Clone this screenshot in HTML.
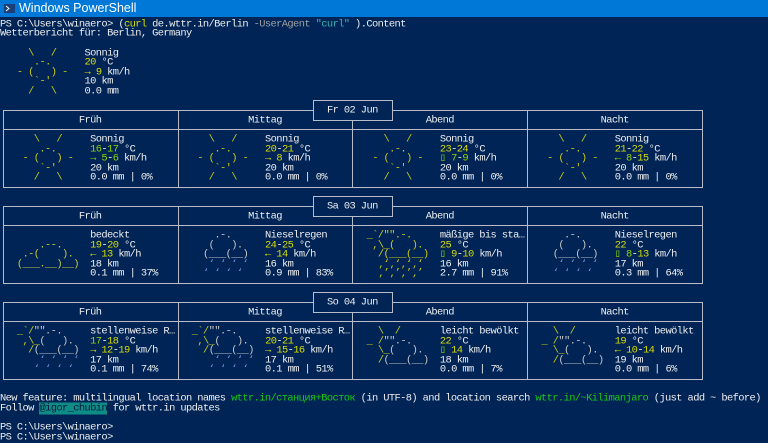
<!DOCTYPE html>
<html><head><meta charset="utf-8"><style>
body{margin:0;width:768px;height:436px;background:#012456;overflow:hidden;position:relative;font-family:"Liberation Mono",monospace;}
.tb{position:absolute;left:0;top:0;width:768px;height:17px;background:#0078d7;color:#fff;font:12.5px "Liberation Sans",sans-serif;line-height:17px;}
.tb span{position:absolute;left:19px;top:0}
.t{position:absolute;margin:0;font:10.4px/9.6px "Liberation Mono","DejaVu Sans Mono",monospace;letter-spacing:-0.6px;white-space:pre;color:#eeeeee;transform:translateY(1.5px);}
.hd{position:absolute;width:169px;text-align:center;font:10.4px/9.6px "Liberation Mono",monospace;letter-spacing:-0.6px;color:#eeeeee;transform:translateY(1.5px);}
.h{position:absolute;height:1px;background:#b6bdc9}
.v{position:absolute;width:1px;background:#b6bdc9}
.y{color:#cdcd10}.o{color:#c9c93a}.g{color:#c8c8c8}.b{color:#6f8fe0}
.n{color:#d7dd00}.m{color:#8fd400}.gr{color:#16c816}.pg{color:#a0a0a0}.cy{color:#3ab0b0}
.bg{background:#0e8c86;color:#0a1a40}
</style></head><body>
<div class="tb"><svg style="position:absolute;left:3px;top:3px" width="12" height="11"><rect x="1" y="1" width="11" height="9" fill="#1b3f7a"/><path d="M3 3l3 2.5-3 2.5" stroke="#fff" fill="none"/></svg><span>Windows PowerShell</span></div>

<pre class="t" style="left:0;top:18.8px">PS C:\Users\winaero&gt; (<span class="n">curl</span> de.wttr.in/Berlin <span class="pg">-UserAgent</span> <span class="cy">"curl"</span> ).Content
Wetterbericht für: Berlin, Germany</pre>
<pre class="t" style="left:0;top:47.6px"> <span class="y">    \   /    </span> Sonnig
 <span class="y">     .-.     </span> <span class="n">20</span> °C
 <span class="y">  - (   ) -  </span> <span class="n">→</span> <span class="n">9</span> km/h
 <span class="y">     `-'     </span> 10 km
 <span class="y">    /   \    </span> 0.0 mm</pre>

<!-- Table 1 -->
<div class="h" style="left:313px;top:100px;width:79px"></div>
<div class="v" style="left:313px;top:100px;height:20px"></div>
<div class="v" style="left:392px;top:100px;height:20px"></div>
<div class="h" style="left:313px;top:120px;width:80px"></div>
<div class="h" style="left:3px;top:110px;width:310px"></div>
<div class="h" style="left:392px;top:110px;width:310px"></div>
<div class="v" style="left:3px;top:110px;height:77px"></div>
<div class="v" style="left:178px;top:110px;height:77px"></div>
<div class="v" style="left:527px;top:110px;height:77px"></div>
<div class="v" style="left:702px;top:110px;height:78px"></div>
<div class="v" style="left:352px;top:120px;height:67px"></div>
<div class="h" style="left:3px;top:129px;width:700px"></div>
<div class="h" style="left:3px;top:187px;width:700px"></div>
<pre class="t" style="left:327px;top:105.2px">Fr 02 Jun</pre>
<div class="hd" style="left:5.6px;top:114.8px">Früh</div>
<div class="hd" style="left:180.5px;top:114.8px">Mittag</div>
<div class="hd" style="left:355.3px;top:114.8px">Abend</div>
<div class="hd" style="left:530.2px;top:114.8px">Nacht</div>
<pre class="t" style="left:5.6px;top:134px"> <span class="y">    \   /    </span> Sonnig
 <span class="y">     .-.     </span> <span class="m">16</span>-<span class="m">17</span> °C
 <span class="y">  - (   ) -  </span> <span class="m">→</span> <span class="m">5</span>-<span class="m">6</span> km/h
 <span class="y">     `-'     </span> 20 km
 <span class="y">    /   \    </span> 0.0 mm | 0%</pre>
<pre class="t" style="left:180.5px;top:134px"> <span class="y">    \   /    </span> Sonnig
 <span class="y">     .-.     </span> <span class="n">20</span>-<span class="n">21</span> °C
 <span class="y">  - (   ) -  </span> <span class="n">→</span> <span class="n">8</span> km/h
 <span class="y">     `-'     </span> 20 km
 <span class="y">    /   \    </span> 0.0 mm | 0%</pre>
<pre class="t" style="left:355.3px;top:134px"> <span class="y">    \   /    </span> Sonnig
 <span class="y">     .-.     </span> <span class="n">23</span>-<span class="n">24</span> °C
 <span class="y">  - (   ) -  </span> <span class="m">▯</span> <span class="m">7</span>-<span class="m">9</span> km/h
 <span class="y">     `-'     </span> 20 km
 <span class="y">    /   \    </span> 0.0 mm | 0%</pre>
<pre class="t" style="left:530.2px;top:134px"> <span class="y">    \   /    </span> Sonnig
 <span class="y">     .-.     </span> <span class="n">21</span>-<span class="n">22</span> °C
 <span class="y">  - (   ) -  </span> <span class="m">←</span> <span class="m">8</span>-<span class="n">15</span> km/h
 <span class="y">     `-'     </span> 20 km
 <span class="y">    /   \    </span> 0.0 mm | 0%</pre>

<!-- Table 2 -->
<div class="h" style="left:313px;top:196px;width:79px"></div>
<div class="v" style="left:313px;top:196px;height:20px"></div>
<div class="v" style="left:392px;top:196px;height:20px"></div>
<div class="h" style="left:313px;top:216px;width:80px"></div>
<div class="h" style="left:3px;top:206px;width:310px"></div>
<div class="h" style="left:392px;top:206px;width:310px"></div>
<div class="v" style="left:3px;top:206px;height:77px"></div>
<div class="v" style="left:178px;top:206px;height:77px"></div>
<div class="v" style="left:527px;top:206px;height:77px"></div>
<div class="v" style="left:702px;top:206px;height:78px"></div>
<div class="v" style="left:352px;top:216px;height:67px"></div>
<div class="h" style="left:3px;top:225px;width:700px"></div>
<div class="h" style="left:3px;top:283px;width:700px"></div>
<pre class="t" style="left:327px;top:201.2px">Sa 03 Jun</pre>
<div class="hd" style="left:5.6px;top:210.8px">Früh</div>
<div class="hd" style="left:180.5px;top:210.8px">Mittag</div>
<div class="hd" style="left:355.3px;top:210.8px">Abend</div>
<div class="hd" style="left:530.2px;top:210.8px">Nacht</div>
<pre class="t" style="left:5.6px;top:230px"> <span class="o">             </span> bedeckt
 <span class="o">     .--.    </span> <span class="n">19</span>-<span class="n">20</span> °C
 <span class="o">  .-(    ).  </span> <span class="n">←</span> <span class="n">13</span> km/h
 <span class="o"> (___.__)__) </span> 18 km
 <span class="o">             </span> 0.1 mm | 37%</pre>
<pre class="t" style="left:180.5px;top:230px"> <span class="g">     .-.     </span> Nieselregen
 <span class="g">    (   ).   </span> <span class="n">24</span>-<span class="n">25</span> °C
 <span class="g">   (___(__)  </span> <span class="n">←</span> <span class="n">14</span> km/h
 <span class="b">    ‘ ‘ ‘ ‘  </span> 16 km
 <span class="b">   ‘ ‘ ‘ ‘   </span> 0.9 mm | 83%</pre>
<pre class="t" style="left:355.3px;top:230px"> <span class="y"> _`/"".-.    </span> mäßige bis sta…
 <span class="y">  ,\_(   ).  </span> <span class="n">25</span> °C
 <span class="y">   /(___(__) </span> <span class="m">▯</span> <span class="n">9</span>-<span class="n">10</span> km/h
 <span class="y">   ‚‘‚‘‚‘‚‘  </span> 16 km
 <span class="y">   ‚’‚’‚’‚’  </span> 2.7 mm | 91%</pre>
<pre class="t" style="left:530.2px;top:230px"> <span class="g">     .-.     </span> Nieselregen
 <span class="g">    (   ).   </span> <span class="n">22</span> °C
 <span class="g">   (___(__)  </span> <span class="m">▯</span> <span class="m">8</span>-<span class="n">13</span> km/h
 <span class="b">    ‘ ‘ ‘ ‘  </span> 17 km
 <span class="b">   ‘ ‘ ‘ ‘   </span> 0.3 mm | 64%</pre>

<!-- Table 3 -->
<div class="h" style="left:313px;top:292px;width:79px"></div>
<div class="v" style="left:313px;top:292px;height:20px"></div>
<div class="v" style="left:392px;top:292px;height:20px"></div>
<div class="h" style="left:313px;top:312px;width:80px"></div>
<div class="h" style="left:3px;top:302px;width:310px"></div>
<div class="h" style="left:392px;top:302px;width:310px"></div>
<div class="v" style="left:3px;top:302px;height:77px"></div>
<div class="v" style="left:178px;top:302px;height:77px"></div>
<div class="v" style="left:527px;top:302px;height:77px"></div>
<div class="v" style="left:702px;top:302px;height:78px"></div>
<div class="v" style="left:352px;top:312px;height:67px"></div>
<div class="h" style="left:3px;top:321px;width:700px"></div>
<div class="h" style="left:3px;top:379px;width:700px"></div>
<pre class="t" style="left:327px;top:297.2px">So 04 Jun</pre>
<div class="hd" style="left:5.6px;top:306.8px">Früh</div>
<div class="hd" style="left:180.5px;top:306.8px">Mittag</div>
<div class="hd" style="left:355.3px;top:306.8px">Abend</div>
<div class="hd" style="left:530.2px;top:306.8px">Nacht</div>
<pre class="t" style="left:5.6px;top:326px"> <span class="y"> _`/</span><span class="g">"".-.    </span> stellenweise R…
 <span class="y">  ,\_</span><span class="g">(   ).  </span> <span class="m">17</span>-<span class="n">18</span> °C
 <span class="y">   /</span><span class="g">(___(__) </span> <span class="n">→</span> <span class="n">12</span>-<span class="n">19</span> km/h
 <span class="b">     ‘ ‘ ‘ ‘ </span> 17 km
 <span class="b">    ‘ ‘ ‘ ‘  </span> 0.1 mm | 74%</pre>
<pre class="t" style="left:180.5px;top:326px"> <span class="y"> _`/</span><span class="g">"".-.    </span> stellenweise R…
 <span class="y">  ,\_</span><span class="g">(   ).  </span> <span class="n">20</span>-<span class="n">21</span> °C
 <span class="y">   /</span><span class="g">(___(__) </span> <span class="n">→</span> <span class="n">15</span>-<span class="n">16</span> km/h
 <span class="b">     ‘ ‘ ‘ ‘ </span> 17 km
 <span class="b">    ‘ ‘ ‘ ‘  </span> 0.1 mm | 51%</pre>
<pre class="t" style="left:355.3px;top:326px"> <span class="y">   \  /      </span> leicht bewölkt
 <span class="y"> _ /</span><span class="g">"".-.    </span> <span class="n">22</span> °C
 <span class="y">   \_</span><span class="g">(   ).  </span> <span class="m">▯</span> <span class="n">14</span> km/h
 <span class="y">   /</span><span class="g">(___(__) </span> 18 km
 <span class="g">             </span> 0.0 mm | 7%</pre>
<pre class="t" style="left:530.2px;top:326px"> <span class="y">   \  /      </span> leicht bewölkt
 <span class="y"> _ /</span><span class="g">"".-.    </span> <span class="n">19</span> °C
 <span class="y">   \_</span><span class="g">(   ).  </span> <span class="n">←</span> <span class="n">10</span>-<span class="n">14</span> km/h
 <span class="y">   /</span><span class="g">(___(__) </span> 19 km
 <span class="g">             </span> 0.0 mm | 6%</pre>

<pre class="t" style="left:0;top:393.2px">New feature: multilingual location names <span class="gr">wttr.in/станция+Восток</span> (in UTF-8) and location search <span class="gr">wttr.in/~Kilimanjaro</span> (just add ~ before)
Follow <span class="bg">@igor_chubin</span> for wttr.in updates

PS C:\Users\winaero&gt;
PS C:\Users\winaero&gt;</pre>
</body></html>
